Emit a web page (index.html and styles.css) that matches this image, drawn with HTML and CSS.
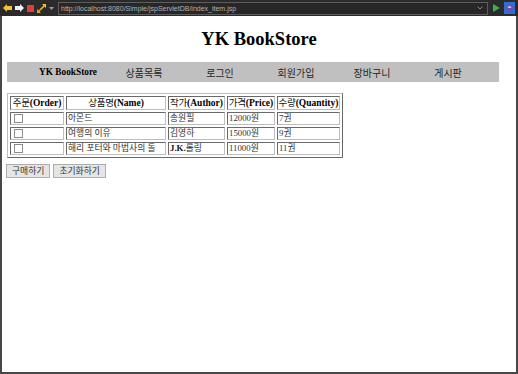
FILE: index.html
```html
<!DOCTYPE html>
<html lang="ko">
<head>
<meta charset="utf-8">
<title>YK BookStore</title>
<link rel="stylesheet" href="styles.css">
</head>
<body>
<div class="window">
  <div class="toolbar">
    <svg class="tb-icon back" width="9" height="8" viewBox="0 0 9 8"><polygon points="0,4 4,0 4,2 9,2 9,6 4,6 4,8" fill="#f2c230"/></svg>
    <svg class="tb-icon fwd" width="9" height="8" viewBox="0 0 9 8"><polygon points="9,4 5,0 5,2 0,2 0,6 5,6 5,8" fill="#f4f4f4"/></svg>
    <span class="stop"></span>
    <svg class="tb-icon refresh" width="9" height="9" viewBox="0 0 9 9"><polygon points="5,0 9,0 9,4 7.5,2.5 4,6 3,5 6.5,1.5" fill="#f2c230"/><polygon points="0,5 0,9 4,9 2.5,7.5 5.5,4.5 4.5,3.5 1.5,6.5" fill="#e0a820"/></svg>
    <svg class="tb-icon drop" width="5" height="3" viewBox="0 0 5 3"><polygon points="0,0 5,0 2.5,3" fill="#9a9a9a"/></svg>
    <div class="url">
      <span class="url-text">http://localhost:8080/Simple/jspServletDB/index_item.jsp</span>
      <svg class="chev" width="6" height="4" viewBox="0 0 6 4"><polyline points="0.5,0.5 3,3 5.5,0.5" fill="none" stroke="#8a8a8a" stroke-width="1"/></svg>
    </div>
    <svg class="tb-icon go" width="7" height="8" viewBox="0 0 7 8"><polygon points="0,0 7,4 0,8" fill="#3db048"/></svg>
    <svg class="tb-icon ext" width="11" height="12" viewBox="0 0 11 12"><rect x="0" y="0" width="11" height="12" fill="#2f6fcf"/><circle cx="5.5" cy="6" r="3.6" fill="#6a4fc0"/><path d="M3.5 5.2 Q5.5 3.2 7.6 5.2 Q5.5 6.4 3.5 5.2Z" fill="#e8e8ff"/></svg>
  </div>
  <div class="viewport">
    <h1 class="title">YK BookStore</h1>
    <nav class="nav">
      <span class="nav-item brand">YK BookStore</span>
      <span class="nav-item">상품목록</span>
      <span class="nav-item">로그인</span>
      <span class="nav-item">회원가입</span>
      <span class="nav-item">장바구니</span>
      <span class="nav-item">게시판</span>
    </nav>
    <table class="items">
      <colgroup>
        <col class="c1"><col class="c2"><col class="c3"><col class="c4"><col class="c5">
      </colgroup>
      <tr>
        <th>주문<b class="en">(Order)</b></th>
        <th>상품명<b class="en">(Name)</b></th>
        <th>작가<b class="en">(Author)</b></th>
        <th>가격<b class="en">(Price)</b></th>
        <th>수량<b class="en">(Quantity)</b></th>
      </tr>
      <tr>
        <td><span class="check"></span></td>
        <td>아몬드</td>
        <td>송원필</td>
        <td>12000원</td>
        <td>7권</td>
      </tr>
      <tr>
        <td><span class="check"></span></td>
        <td>여행의 이유</td>
        <td>김영하</td>
        <td>15000원</td>
        <td>9권</td>
      </tr>
      <tr>
        <td><span class="check"></span></td>
        <td>해리 포터와 마법사의 돌</td>
        <td><b class="en-sm">J.K.</b>롤링</td>
        <td>11000원</td>
        <td>11권</td>
      </tr>
    </table>
    <div class="actions">
      <button class="btn" type="button">구매하기</button>
      <button class="btn" type="button">초기화하기</button>
    </div>
  </div>
</div>
</body>
</html>
```

FILE: styles.css
```css
html, body {
  margin: 0;
  padding: 0;
  background: #3c3c3c;
}

.window {
  width: 518px;
  height: 374px;
  background: #474747;
  display: flex;
  flex-direction: column;
  overflow: hidden;
}

.toolbar {
  height: 16px;
  flex: none;
  background: #2b2b2b;
  display: flex;
  align-items: center;
}

.tb-icon { display: block; flex: none; }
.back { margin-left: 3px; }
.fwd { margin-left: 3px; }
.stop {
  display: block;
  width: 7px;
  height: 7px;
  margin-left: 3px;
  background: #e23d3d;
  flex: none;
}
.refresh { margin-left: 3px; }
.drop { margin-left: 3px; }

.url {
  margin-left: 4px;
  width: 430px;
  height: 13px;
  box-sizing: border-box;
  border: 1px solid #5e5e5e;
  background: #272727;
  display: flex;
  align-items: center;
  justify-content: space-between;
  padding: 0 4px 0 2px;
  flex: none;
}
.url-text {
  font-family: "Liberation Sans", Arial, sans-serif;
  font-size: 7px;
  color: #b4b4b4;
  white-space: nowrap;
}
.chev { display: block; }
.go { margin-left: 5px; }
.ext { margin-left: 4px; }

.viewport {
  flex: 1;
  margin: 0 2px 2px 2px;
  background: #ffffff;
  padding: 0 5px;
  font-family: "Liberation Serif", "Noto Sans CJK KR", serif;
  color: #222;
}

.title {
  margin: 12px 0 0 0;
  height: 22px;
  line-height: 22px;
  font-size: 18.5px;
  font-weight: bold;
  text-align: center;
  color: #000;
}

.nav {
  margin-top: 12px;
  width: 492px;
  height: 20px;
  background: #c0c0c0;
  display: flex;
  align-items: center;
  padding-left: 23px;
  box-sizing: border-box;
}
.nav-item {
  width: 76px;
  text-align: center;
  font-family: "Noto Sans CJK KR", sans-serif;
  font-size: 10px;
  color: #262626;
  white-space: nowrap;
}
.nav-item.brand {
  font-family: "Liberation Serif", serif;
  font-weight: bold;
  font-size: 9.3px;
  color: #000;
}

.items {
  margin-top: 11px;
  width: 336px;
  table-layout: fixed;
  border: 1px outset #bdbdbd;
  border-spacing: 2px;
  border-collapse: separate;
}
.c1 { width: 54px; }
.c2 { width: 100px; }
.c3 { width: 57px; }
.c4 { width: 48px; }
.c5 { width: 63px; }

.items th, .items td {
  height: 13px;
  box-sizing: border-box;
  border: 1px inset #bdbdbd;
  padding: 0 1px;
  line-height: 11px;
  white-space: nowrap;
}
.items th {
  padding: 0;
  font-family: "Noto Sans CJK KR", sans-serif;
  font-size: 9.5px;
  font-weight: normal;
  color: #111;
  text-align: center;
  letter-spacing: -0.2px;
}
.items th .en {
  font-family: "Liberation Serif", serif;
  font-weight: bold;
  font-size: 9.5px;
  letter-spacing: 0;
  color: #000;
}
.items td {
  font-family: "Liberation Serif", "Noto Sans CJK KR", serif;
  font-size: 8.8px;
  color: #333;
  text-align: left;
  overflow: hidden;
}
.items td .en-sm {
  font-weight: bold;
  color: #111;
}

.check {
  display: inline-block;
  width: 9px;
  height: 9px;
  box-sizing: border-box;
  border: 1px solid #8c8c8c;
  background: #fff;
  margin-left: 2px;
  vertical-align: middle;
}

.actions {
  margin-top: 6px;
  display: flex;
  gap: 3px;
  margin-left: -1px;
}
.btn {
  height: 14px;
  padding: 0 5px;
  border: 1px solid #adadad;
  background: #e5e5e5;
  font-family: "Noto Sans CJK KR", sans-serif;
  font-size: 8.8px;
  line-height: 12px;
  color: #333;
  border-radius: 0;
}
```
